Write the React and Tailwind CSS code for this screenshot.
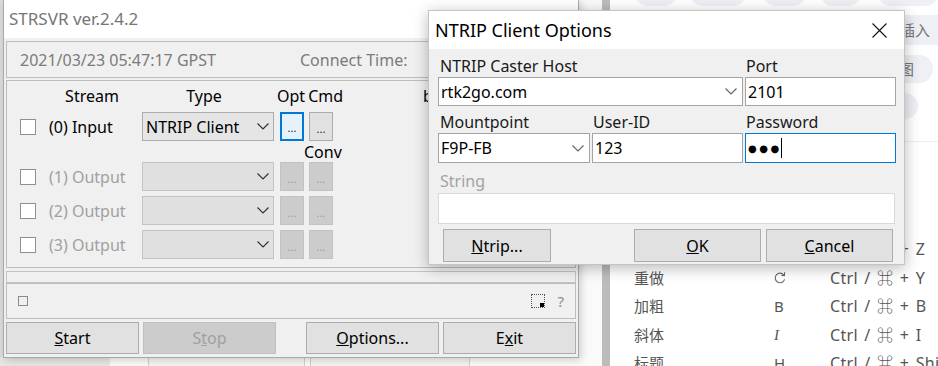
import React from 'react';

// chevron used by the combo boxes
function Chevron({ className }) {
  return (
    <svg width="12" height="7" viewBox="0 0 12 7" className={className}>
      <polyline points="0.5,0.5 6,6 11.5,0.5" fill="none" stroke="currentColor" strokeWidth="1.2" />
    </svg>
  );
}

function DotBtn({ focused, disabled, className = '' }) {
  const look = focused
    ? 'bg-[#e5f1fb] border-2 border-[#0078d7] text-[#222]'
    : disabled
    ? 'bg-[#cccccc] border border-[#c2c2c2] text-[#9c9c9c]'
    : 'bg-[#e1e1e1] border border-[#adadad] text-[#222]';
  return (
    <div className={`w-[24px] h-[29px] flex items-end justify-center pb-[6px] text-[11px] leading-none ${look} ${className}`}>
      ...
    </div>
  );
}

function StreamRow({ label, value, disabled, focused }) {
  return (
    <div className="flex items-center h-[29px]">
      <div className="ml-[13px] w-[16px] h-[16px] border border-[#8f8f8f] bg-white" />
      <span className={`ml-[13px] w-[93px] whitespace-nowrap ${disabled ? 'text-[#a0a0a0]' : 'text-black'}`}>{label}</span>
      <div
        className={`w-[132px] h-full flex items-center justify-between pl-[3px] pr-[4px] ${
          disabled ? 'bg-[#e0e0e0] border border-[#c4c4c4]' : 'bg-[#e5e5e5] border border-[#adadad]'
        }`}
      >
        <span className="whitespace-nowrap">{value}</span>
        <Chevron className="text-[#333]" />
      </div>
      <DotBtn className="ml-[6px]" focused={focused} disabled={disabled} />
      <DotBtn className="ml-[5px]" disabled={disabled} />
    </div>
  );
}

function WinBtn({ children, disabled, className = '' }) {
  return (
    <div
      className={`h-full flex items-center justify-center text-[16px] ${
        disabled ? 'bg-[#cccccc] border border-[#bfbfbf] text-[#a0a0a0]' : 'bg-[#e1e1e1] border border-[#adadad] text-black'
      } ${className}`}
    >
      {children}
    </div>
  );
}

function MainWindow() {
  return (
    <div className="absolute left-[3px] top-0 w-[576px] h-[358px] flex flex-col bg-[#f0f0f0] border-x border-b border-[#a9a9a9] shadow-[2px_2px_8px_rgba(0,0,0,0.18)]">
      <div className="h-[38px] shrink-0 bg-white flex items-center pl-[5px] text-[17px] text-[#767676]">STRSVR ver.2.4.2</div>
      <div className="flex flex-col px-[2px] text-[16px]">
        <div className="mt-[3px] h-[37px] border border-[#bdbdbd] flex items-center text-[#7b7b7b] whitespace-nowrap">
          <span className="ml-[13px] w-[280px]">2021/03/23 05:47:17 GPST</span>
          <span>Connect Time:</span>
        </div>

        <div className="mt-[2px] h-[188px] border border-[#bdbdbd] flex flex-col">
          <div className="mt-[5px] h-[20px] flex items-center whitespace-nowrap">
            <span className="ml-[33px] w-[104px] text-center">Stream</span>
            <span className="w-[120px] text-center">Type</span>
            <span className="ml-[13px]">Opt</span>
            <span className="ml-[3px]">Cmd</span>
            <span className="ml-[80px]">bps</span>
          </div>
          <div className="mt-[6px]">
            <StreamRow label="(0) Input" value="NTRIP Client" focused />
          </div>
          <div className="h-[21px] flex items-center pl-[297px]">Conv</div>
          <StreamRow label="(1) Output" value="" disabled />
          <div className="mt-[5px]">
            <StreamRow label="(2) Output" value="" disabled />
          </div>
          <div className="mt-[5px]">
            <StreamRow label="(3) Output" value="" disabled />
          </div>
        </div>

        <div className="mt-[3px] h-[12px] border border-[#c4c4c4]" />

        <div className="h-[36px] border border-[#bdbdbd] flex items-center">
          <div className="ml-[11px] w-[10px] h-[10px] border border-[#8a8a8a]" />
          <div className="ml-auto w-[14px] h-[14px] border border-dotted border-[#555] relative">
            <div className="absolute right-0 bottom-0 w-[4px] h-[4px] bg-black" />
          </div>
          <span className="ml-[12px] mr-[11px] text-[15px] text-[#8c8c8c]">?</span>
        </div>

        <div className="mt-[3px] h-[32px] flex">
          <WinBtn className="w-[133px]">
            <span><u>S</u>tart</span>
          </WinBtn>
          <WinBtn className="ml-[4px] w-[133px]" disabled>
            <span>S<u>t</u>op</span>
          </WinBtn>
          <WinBtn className="ml-[30px] w-[133px]">
            <span><u>O</u>ptions...</span>
          </WinBtn>
          <WinBtn className="ml-[4px] w-[133px]">
            <span>E<u>x</u>it</span>
          </WinBtn>
        </div>
      </div>
    </div>
  );
}

function Field({ children, className = '', focused }) {
  return (
    <div
      className={`h-full bg-white flex items-center pl-[2px] pr-[5px] whitespace-nowrap ${
        focused ? 'border border-[#0078d7]' : 'border border-[#a5a5a5]'
      } ${className}`}
    >
      {children}
    </div>
  );
}

function NtripDialog() {
  return (
    <div className="absolute left-[428px] top-[10px] w-[477px] h-[255px] flex flex-col bg-[#f0f0f0] border border-[#c4c4c4] shadow-[0_3px_14px_rgba(0,0,0,0.28)] text-[16px] text-black">
      <div className="h-[38px] shrink-0 bg-white flex items-center justify-between pl-[6px] pr-[17px] text-[18px]">
        <span>NTRIP Client Options</span>
        <svg width="15" height="15" viewBox="0 0 15 15">
          <path d="M0.5 0.5 L14.5 14.5 M14.5 0.5 L0.5 14.5" stroke="#111" strokeWidth="1.1" fill="none" />
        </svg>
      </div>
      <div className="flex flex-col px-[9px]">
        <div className="mt-[5px] h-[18px] grid grid-cols-[152px_151px_151px] gap-x-[2px] items-center text-[#1a1a1a]">
          <span className="col-span-2 pl-[2px]">NTRIP Caster Host</span>
          <span className="pl-[1px]">Port</span>
        </div>
        <div className="mt-[5px] h-[29px] grid grid-cols-[152px_151px_151px] gap-x-[2px]">
          <Field className="col-span-2 justify-between">
            <span>rtk2go.com</span>
            <Chevron className="text-[#666]" />
          </Field>
          <Field>2101</Field>
        </div>
        <div className="mt-[4px] h-[18px] grid grid-cols-[152px_151px_151px] gap-x-[2px] items-center text-[#1a1a1a]">
          <span className="pl-[2px]">Mountpoint</span>
          <span className="pl-[1px]">User-ID</span>
          <span className="pl-[1px]">Password</span>
        </div>
        <div className="mt-[5px] h-[30px] grid grid-cols-[152px_151px_151px] gap-x-[2px]">
          <Field className="justify-between">
            <span>F9P-FB</span>
            <Chevron className="text-[#666]" />
          </Field>
          <Field>123</Field>
          <Field focused>
            <span className="font-['DejaVu_Sans',sans-serif] text-[10px] tracking-[2.5px]">●●●</span>
            <span className="-ml-[1px] w-[1px] h-[20px] bg-black" />
          </Field>
        </div>
        <div className="mt-[9px] h-[18px] flex items-center pl-[2px] text-[#a3a3a3]">String</div>
        <div className="mt-[3px] h-[31px] bg-white border border-[#d9d9d9]" />
        <div className="mt-[5px] h-[33px] flex">
          <WinBtn className="ml-[5px] w-[108px]">
            <span><u>N</u>trip...</span>
          </WinBtn>
          <WinBtn className="ml-[83px] w-[127px]">
            <span><u>O</u>K</span>
          </WinBtn>
          <WinBtn className="ml-[5px] w-[127px]">
            <span><u>C</u>ancel</span>
          </WinBtn>
        </div>
      </div>
    </div>
  );
}

function RedoIcon() {
  return (
    <svg width="12" height="13" viewBox="0 0 12 13" className="text-[#666]">
      <path d="M10 4.2 A4.8 4.8 0 1 0 10.6 8.4" fill="none" stroke="currentColor" strokeWidth="1.1" />
      <path d="M10.6 1.2 L10.4 4.6 L7.1 4.2" fill="none" stroke="currentColor" strokeWidth="1.1" />
    </svg>
  );
}

function UndoIcon() {
  return (
    <svg width="12" height="13" viewBox="0 0 12 13" className="text-[#666]">
      <path d="M2 4.2 A4.8 4.8 0 1 1 1.4 8.4" fill="none" stroke="currentColor" strokeWidth="1.1" />
      <path d="M1.4 1.2 L1.6 4.6 L4.9 4.2" fill="none" stroke="currentColor" strokeWidth="1.1" />
    </svg>
  );
}

const shortcuts = [
  { name: '撤销', icon: <UndoIcon />, keys: 'Ctrl / ⌘ + Z' },
  { name: '重做', icon: <RedoIcon />, keys: 'Ctrl / ⌘ + Y' },
  { name: '加粗', icon: <span>B</span>, keys: 'Ctrl / ⌘ + B' },
  { name: '斜体', icon: <span className="font-['Liberation_Serif',serif] italic">I</span>, keys: 'Ctrl / ⌘ + I' },
  { name: '标题', icon: <span>H</span>, keys: 'Ctrl / ⌘ + Shift + 1' },
];

function EditorPane() {
  return (
    <div className="flex-1 min-w-0 bg-white flex flex-col overflow-hidden">
      <div className="-mt-[20px] h-[26px] flex shrink-0">
        <div className="ml-[25px] w-[52px] rounded-full bg-[#eef0f5]" />
        <div className="ml-[13px] w-[68px] rounded-full bg-[#eef0f5]" />
        <div className="ml-[17px] w-[53px] rounded-full bg-[#eef0f5]" />
        <div className="ml-[14px] w-[51px] rounded-full bg-[#eef0f5]" />
        <div className="ml-[17px] w-[60px] shrink-0 rounded-full bg-[#eef0f5]" />
      </div>
      <div className="flex flex-col items-end">
        <div className="mt-[9px] -mr-[14px] h-[30px] w-[60px] rounded-full bg-[#eef0f5] flex items-center pl-[8px] text-[15px] text-[#777]">
          插入
        </div>
        <div className="mt-[10px] mr-[5px] h-[28px] w-[44px] rounded-full bg-[#eef0f5] flex items-center pl-[10px] text-[15px] text-[#777]">
          图
        </div>
        <div className="mt-[10px] mr-[20px] h-[26px] w-[30px] rounded-full bg-[#eef0f5]" />
        <div className="mt-[22px] h-px w-full bg-[#eeeeee]" />
      </div>
      <div className="mt-[93px] flex flex-col text-[15px] text-[#555]">
        {shortcuts.map((s) => (
          <div key={s.name} className="h-[28.5px] grid grid-cols-[140px_56px_1fr] items-center pl-[24px] whitespace-nowrap">
            <span>{s.name}</span>
            <span className="flex items-center">{s.icon}</span>
            <span className="text-[16px] tracking-[0.3px] [word-spacing:2px]">{s.keys}</span>
          </div>
        ))}
      </div>
    </div>
  );
}

export default function App() {
  return (
    <div className="relative w-[938px] h-[366px] overflow-hidden bg-white font-['Noto_Sans','Noto_Sans_CJK_SC','DejaVu_Sans',sans-serif]">
      <div className="flex h-full">
        <div className="w-[602px] shrink-0 flex flex-col bg-[#fafafa]">
          <div className="flex-1 flex">
            <div className="w-[3px] bg-[#dcdcdc]" />
          </div>
          <div className="h-[9px] flex">
            <div className="w-[110px] bg-[#e6e6e6]" />
            <div className="ml-[38px] w-[157px] border-x border-[#cfcfcf] bg-[#f4f4f4]" />
            <div className="ml-[5px] w-[160px] border-x border-[#cfcfcf] bg-[#f4f4f4]" />
          </div>
        </div>
        <div className="w-[8px] shrink-0 bg-[#bcbcbc]" />
        <EditorPane />
      </div>
      <MainWindow />
      <NtripDialog />
    </div>
  );
}
